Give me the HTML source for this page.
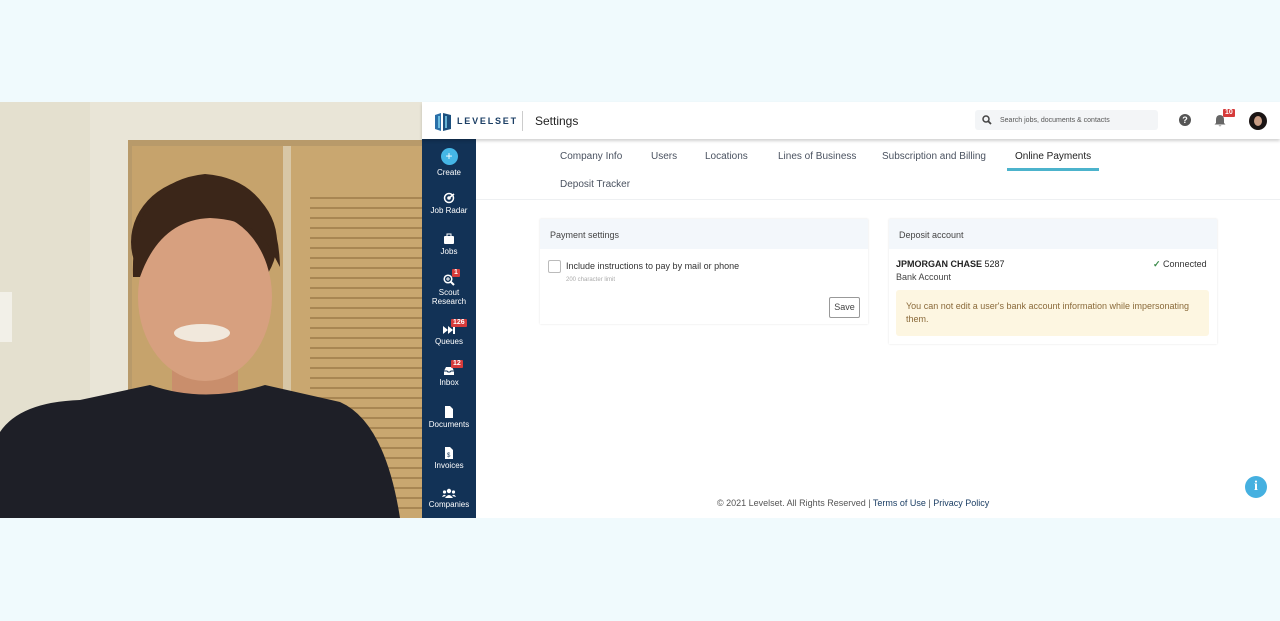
<!DOCTYPE html>
<html><head><style>
*{margin:0;padding:0;box-sizing:border-box}
body{width:1280px;height:621px;background:#f0fafd;font-family:"Liberation Sans",sans-serif;position:relative;overflow:hidden}
.abs{position:absolute}
#app{left:422px;top:102px;width:858px;height:416px;background:#fff}
#top{left:0;top:0;width:858px;height:37px;background:#fff;box-shadow:0 2px 3px rgba(0,0,0,.18);z-index:2}
#side{left:0;top:37px;width:54px;height:379px;background:#123256;color:#fff;font-size:8px;text-align:center}
.ni{position:absolute;left:0;width:54px}
.ni svg{display:block;margin:0 auto 2px}
.badge{position:absolute;background:#d63b3b;color:#fff;font-size:7px;font-weight:bold;padding:0 2px;line-height:8px;border-radius:1px}
.tab{position:absolute;font-size:10px;color:#4a5260}
.card{position:absolute;background:#fff;box-shadow:0 0 2px rgba(0,0,0,.12)}
.ch{height:30px;background:#f3f7fb;font-size:9px;color:#444;padding:11px 10px}
</style></head><body>
<svg class="abs" style="left:0;top:102px" width="422" height="416" viewBox="0 0 422 416">
<rect width="422" height="416" fill="#e9e5d7"/>
<rect x="0" y="0" width="90" height="416" fill="#e4e0cf"/>
<rect x="0" y="190" width="12" height="50" fill="#f2f0e8"/>
<rect x="128" y="38" width="294" height="378" fill="#b89a6a"/>
<rect x="132" y="44" width="152" height="372" fill="#c6a36c"/>
<rect x="290" y="44" width="132" height="372" fill="#c9a770"/>
<rect x="283" y="44" width="8" height="372" fill="#d8c7a6"/>
<g fill="#a88653">
<rect x="310" y="95" width="112" height="2"/><rect x="310" y="105" width="112" height="2"/><rect x="310" y="115" width="112" height="2"/><rect x="310" y="125" width="112" height="2"/><rect x="310" y="135" width="112" height="2"/><rect x="310" y="145" width="112" height="2"/><rect x="310" y="155" width="112" height="2"/><rect x="310" y="165" width="112" height="2"/><rect x="310" y="175" width="112" height="2"/><rect x="310" y="185" width="112" height="2"/><rect x="310" y="195" width="112" height="2"/><rect x="310" y="205" width="112" height="2"/><rect x="310" y="215" width="112" height="2"/><rect x="310" y="225" width="112" height="2"/><rect x="310" y="235" width="112" height="2"/><rect x="310" y="245" width="112" height="2"/><rect x="310" y="255" width="112" height="2"/><rect x="310" y="265" width="112" height="2"/><rect x="310" y="275" width="112" height="2"/><rect x="310" y="285" width="112" height="2"/><rect x="310" y="295" width="112" height="2"/><rect x="310" y="305" width="112" height="2"/><rect x="310" y="315" width="112" height="2"/><rect x="310" y="325" width="112" height="2"/><rect x="310" y="335" width="112" height="2"/><rect x="310" y="345" width="112" height="2"/><rect x="310" y="355" width="112" height="2"/><rect x="310" y="365" width="112" height="2"/><rect x="310" y="375" width="112" height="2"/><rect x="310" y="385" width="112" height="2"/><rect x="310" y="395" width="112" height="2"/><rect x="310" y="405" width="112" height="2"/>
</g>
<ellipse cx="204" cy="140" rx="73" ry="65" fill="#3b2619"/>
<rect x="172" y="245" width="66" height="50" fill="#c98e6c"/>
<ellipse cx="205" cy="195" rx="67" ry="84" fill="#d7a07f"/>
<path d="M133 175 Q130 80 205 72 Q278 78 280 165 L272 150 Q258 118 210 116 Q160 118 140 175 Z" fill="#3b2619"/>
<ellipse cx="202" cy="231" rx="28" ry="9" fill="#f1e8dc"/>
<path d="M0 416 L0 330 Q20 300 80 298 L150 283 Q205 302 265 283 L340 300 Q385 320 400 416 Z" fill="#1e1f27"/>
</svg>
<div id="app" class="abs">
 <div id="top" class="abs">
  <svg class="abs" style="left:12px;top:10px" width="18" height="20" viewBox="0 0 18 20"><path d="M1 3 L7 1 L7 19 L1 17Z" fill="#2a6fa8"/><path d="M9 1 L17 3 L17 17 L9 19Z" fill="#1b4f7e"/><path d="M5 4 V16 M12 4 V16" stroke="#7fd3f0" stroke-width="1.5"/></svg>
  <div class="abs" style="left:35px;top:14px;font-size:9px;letter-spacing:1.8px;color:#1b3e64;font-weight:bold">LEVELSET</div>
  <div class="abs" style="left:100px;top:9px;width:1px;height:20px;background:#ccc"></div>
  <div class="abs" style="left:113px;top:12px;font-size:12px;color:#222">Settings</div>
  <div class="abs" style="left:553px;top:8px;width:183px;height:20px;background:#f3f5f7;border-radius:3px"></div>
  <svg class="abs" style="left:560px;top:13px" width="10" height="10" viewBox="0 0 10 10"><circle cx="4" cy="4" r="3" fill="none" stroke="#444" stroke-width="1.5"/><path d="M6 6 L9 9" stroke="#444" stroke-width="1.8"/></svg>
  <div class="abs" style="left:578px;top:15px;font-size:7px;color:#555">Search jobs, documents &amp; contacts</div>
  <div class="abs" style="left:757px;top:12px;width:12px;height:12px;border-radius:50%;background:#555;color:#fff;font-size:9px;font-weight:bold;text-align:center;line-height:12px">?</div>
  <svg class="abs" style="left:792px;top:12px" width="12" height="13" viewBox="0 0 12 13"><path d="M6 1 Q10 1 10 6 L10 9 L11.5 10.5 L.5 10.5 L2 9 L2 6 Q2 1 6 1Z M4.5 11.5 H7.5 Q6 13 4.5 11.5Z" fill="#666"/></svg>
  <div class="badge" style="left:801px;top:7px">10</div>
  <div class="abs" style="left:827px;top:10px;width:18px;height:18px;border-radius:50%;background:#1a1414"><div style="margin:4px 5px;width:8px;height:10px;border-radius:50%;background:#c89c84"></div></div>
 </div>
 <div id="side" class="abs">
  <div class="ni" style="top:9px"><div style="width:17px;height:17px;border-radius:50%;background:#45b6e6;margin:0 auto 3px;font-size:12px;line-height:16px">+</div>Create</div>
  <div class="ni" style="top:53px"><svg width="12" height="12" viewBox="0 0 12 12"><circle cx="6" cy="6" r="4.5" fill="none" stroke="#fff" stroke-width="1.5"/><circle cx="6" cy="6" r="1.8" fill="#fff"/><path d="M6 6 L11 2" stroke="#fff" stroke-width="1.5"/></svg>Job Radar</div>
  <div class="ni" style="top:94px"><svg width="12" height="12" viewBox="0 0 12 12"><rect x="1" y="3" width="10" height="8" rx="1" fill="#fff"/><rect x="4" y="1" width="4" height="3" fill="none" stroke="#fff"/></svg>Jobs</div>
  <div class="ni" style="top:135px"><svg width="12" height="12" viewBox="0 0 12 12"><circle cx="5" cy="5" r="3.8" fill="none" stroke="#fff" stroke-width="1.5"/><path d="M8 8 L11 11" stroke="#fff" stroke-width="2"/><path d="M5 3V7M3 5H7" stroke="#fff"/></svg>Scout<br>Research</div>
  <div class="badge" style="left:30px;top:130px">1</div>
  <div class="ni" style="top:186px"><svg width="12" height="10" viewBox="0 0 12 10"><path d="M0 1 L5 5 L0 9Z M5 1 L10 5 L5 9Z" fill="#fff"/><rect x="10" y="1" width="2" height="8" fill="#fff"/></svg>Queues</div>
  <div class="badge" style="left:29px;top:180px">126</div>
  <div class="ni" style="top:227px"><svg width="12" height="10" viewBox="0 0 12 10"><path d="M1 5 L3 1 H9 L11 5 V9 H1Z" fill="#fff"/><path d="M1 5 H4 L5 6 H7 L8 5 H11" stroke="#123256" fill="none"/></svg>Inbox</div>
  <div class="badge" style="left:29px;top:221px">12</div>
  <div class="ni" style="top:267px"><svg width="10" height="12" viewBox="0 0 10 12"><path d="M1 0 H6 L9 3 V12 H1Z" fill="#fff"/></svg>Documents</div>
  <div class="ni" style="top:308px"><svg width="10" height="12" viewBox="0 0 10 12"><path d="M1 0 H6 L9 3 V12 H1Z" fill="#fff"/><text x="3" y="10" font-size="6" fill="#123256">$</text></svg>Invoices</div>
  <div class="ni" style="top:349px"><svg width="14" height="10" viewBox="0 0 14 10"><circle cx="7" cy="3" r="2.2" fill="#fff"/><circle cx="2.5" cy="4" r="1.6" fill="#fff"/><circle cx="11.5" cy="4" r="1.6" fill="#fff"/><path d="M3 10 Q7 4 11 10Z M0 9 Q2 5 4 8Z M10 8 Q12 5 14 9Z" fill="#fff"/></svg>Companies</div>
 </div>
 <div class="tab" style="left:138px;top:49px">Company Info</div>
 <div class="tab" style="left:229px;top:49px">Users</div>
 <div class="tab" style="left:283px;top:49px">Locations</div>
 <div class="tab" style="left:356px;top:49px">Lines of Business</div>
 <div class="tab" style="left:460px;top:49px">Subscription and Billing</div>
 <div class="tab" style="left:593px;top:49px;color:#222">Online Payments</div>
 <div class="abs" style="left:585px;top:66px;width:92px;height:3px;background:#4cb3cc"></div>
 <div class="tab" style="left:138px;top:77px">Deposit Tracker</div>
 <div class="abs" style="left:54px;top:97px;width:804px;height:1px;background:#eef0f2"></div>
 <div class="card" style="left:118px;top:117px;width:328px;height:105px">
  <div class="ch">Payment settings</div>
  <div class="abs" style="left:8px;top:41px;width:13px;height:13px;border:1px solid #bbb;border-radius:2px"></div>
  <div class="abs" style="left:26px;top:42px;font-size:9px;color:#333">Include instructions to pay by mail or phone</div>
  <div class="abs" style="left:26px;top:58px;font-size:6px;color:#aaa">200 character limit</div>
  <div class="abs" style="left:289px;top:78px;width:31px;height:21px;border:1px solid #999;border-radius:2px;font-size:9px;color:#444;text-align:center;line-height:19px">Save</div>
 </div>
 <div class="card" style="left:467px;top:117px;width:328px;height:125px">
  <div class="ch">Deposit account</div>
  <div class="abs" style="left:7px;top:40px;font-size:9px;color:#222"><b>JPMORGAN CHASE</b> 5287</div>
  <div class="abs" style="left:7px;top:53px;font-size:9px;color:#444">Bank Account</div>
  <div class="abs" style="left:264px;top:40px;font-size:9px;color:#333"><span style="color:#3a8a4a;font-weight:bold">✓</span> Connected</div>
  <div class="abs" style="left:7px;top:71px;width:313px;height:46px;background:#fdf6e1;border-radius:3px;font-size:9px;color:#8a6a3a;padding:10px 10px;line-height:13px">You can not edit a user's bank account information while impersonating them.</div>
 </div>
 <div class="abs" style="left:295px;top:396px;font-size:9px;color:#555">© 2021 Levelset. All Rights Reserved | <span style="color:#1b3e64">Terms of Use</span> | <span style="color:#1b3e64">Privacy Policy</span></div>
 <div class="abs" style="left:823px;top:374px;width:22px;height:22px;border-radius:50%;background:#45b0e0;color:#fff;font-weight:bold;font-size:14px;text-align:center;line-height:22px;font-family:'Liberation Serif',serif">i</div>
</div>
</body></html>
